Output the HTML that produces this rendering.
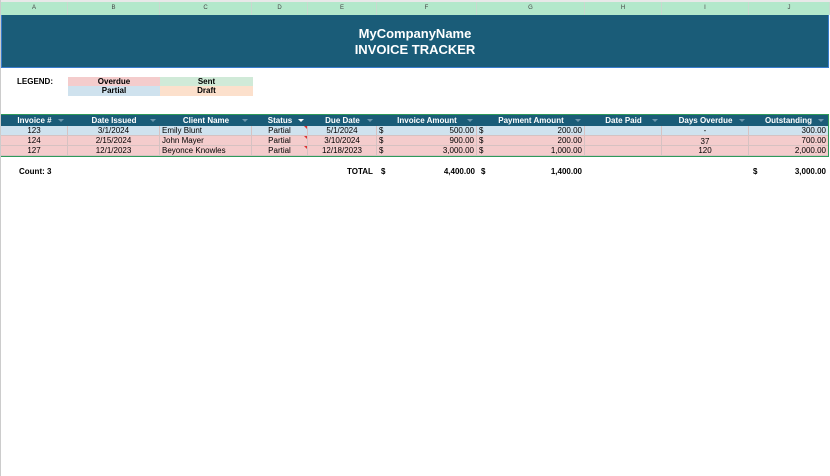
<!DOCTYPE html>
<html><head><meta charset="utf-8"><style>
*{margin:0;padding:0;box-sizing:border-box}
body{width:830px;height:476px;background:#fff;position:relative;overflow:hidden;font-family:"Liberation Sans",Arial,sans-serif;}
.a{position:absolute;white-space:nowrap;}
.hc{position:absolute;top:2px;height:13px;background:#b3e8cb;border-right:1px solid #c8d8cf;font-size:6px;color:#444;text-align:center;line-height:13px;}
.row{position:absolute;left:1px;width:827px;}
.c{position:absolute;top:0;height:100%;font-size:8px;line-height:10px;padding:0 2px;border-right:1px solid #d6c2c2;border-bottom:1px solid #d6c2c2;}
.th{position:absolute;top:0;height:11px;font-size:8px;font-weight:bold;color:#fff;line-height:11px;text-align:center;}
.f{position:absolute;right:4px;top:4px;width:0;height:0;border-left:3px solid transparent;border-right:3px solid transparent;border-top:3px solid #6d97ad;}
.tri{position:absolute;right:0;top:0;width:0;height:0;border-left:3px solid transparent;border-top:3px solid #d33;}
</style></head><body>
<div class="a" style="left:0;top:0;width:1px;height:476px;background:#ccc"></div>
<div class="a" style="left:1px;top:0;width:829px;height:2px;background:#e8e8e8"></div>
<div class="hc" style="left:1px;width:67px">A</div>
<div class="hc" style="left:68px;width:92px">B</div>
<div class="hc" style="left:160px;width:92px">C</div>
<div class="hc" style="left:252px;width:56px">D</div>
<div class="hc" style="left:308px;width:69px">E</div>
<div class="hc" style="left:377px;width:100px">F</div>
<div class="hc" style="left:477px;width:108px">G</div>
<div class="hc" style="left:585px;width:77px">H</div>
<div class="hc" style="left:662px;width:87px">I</div>
<div class="hc" style="left:749px;width:81px">J</div>

<div class="a" style="left:1px;top:15px;width:828px;height:53px;background:#1a5c78;border-left:1px solid #3a7ccc;border-bottom:1px solid #3a7ccc;border-right:1px solid #3a7ccc;color:#fff;font-weight:bold;font-size:13px;text-align:center;line-height:16px;padding-top:11px">MyCompanyName<br>INVOICE TRACKER</div>

<div class="a" style="left:17px;top:77px;font-size:8px;font-weight:bold">LEGEND:</div>
<div class="a" style="left:68px;top:77px;width:92px;height:9px;background:#f4cccc;font-size:8px;font-weight:bold;text-align:center;line-height:9px">Overdue</div>
<div class="a" style="left:160px;top:77px;width:93px;height:9px;background:#d0ead8;font-size:8px;font-weight:bold;text-align:center;line-height:9px">Sent</div>
<div class="a" style="left:68px;top:86px;width:92px;height:10px;background:#cfe2ee;font-size:8px;font-weight:bold;text-align:center;line-height:10px">Partial</div>
<div class="a" style="left:160px;top:86px;width:93px;height:10px;background:#fce0cc;font-size:8px;font-weight:bold;text-align:center;line-height:10px">Draft</div>

<div class="a" style="left:1px;top:114px;width:828px;height:43px;border:1px solid #2f9a5a"></div>
<div class="row" style="top:115px;height:11px;background:#1a5c78">
<div class="th" style="left:0;width:67px">Invoice #<span class="f"></span></div>
<div class="th" style="left:67px;width:92px">Date Issued<span class="f"></span></div>
<div class="th" style="left:159px;width:92px">Client Name<span class="f"></span></div>
<div class="th" style="left:251px;width:56px">Status<span class="f" style="border-top-color:#fff"></span></div>
<div class="th" style="left:307px;width:69px">Due Date<span class="f"></span></div>
<div class="th" style="left:376px;width:100px">Invoice Amount<span class="f"></span></div>
<div class="th" style="left:476px;width:108px">Payment Amount<span class="f"></span></div>
<div class="th" style="left:584px;width:77px">Date Paid<span class="f"></span></div>
<div class="th" style="left:661px;width:87px">Days Overdue<span class="f"></span></div>
<div class="th" style="left:748px;width:79px">Outstanding<span class="f"></span></div>
</div>

<div class="row" style="top:126px;height:10px;background:#cfe2ee">
<div class="c" style="left:0;width:67px;text-align:center">123</div>
<div class="c" style="left:67px;width:92px;text-align:center">3/1/2024</div>
<div class="c" style="left:159px;width:92px">Emily Blunt</div>
<div class="c" style="left:251px;width:56px;text-align:center">Partial<span class="tri"></span></div>
<div class="c" style="left:307px;width:69px;text-align:center">5/1/2024</div>
<div class="c" style="left:376px;width:100px">$<span style="float:right">500.00</span></div>
<div class="c" style="left:476px;width:108px">$<span style="float:right">200.00</span></div>
<div class="c" style="left:584px;width:77px"></div>
<div class="c" style="left:661px;width:87px;text-align:center">-</div>
<div class="c" style="left:748px;width:79px;text-align:right;border-right:0">300.00</div>
</div>
<div class="row" style="top:136px;height:10px;background:#f4cccc">
<div class="c" style="left:0;width:67px;text-align:center">124</div>
<div class="c" style="left:67px;width:92px;text-align:center">2/15/2024</div>
<div class="c" style="left:159px;width:92px">John Mayer</div>
<div class="c" style="left:251px;width:56px;text-align:center">Partial<span class="tri"></span></div>
<div class="c" style="left:307px;width:69px;text-align:center">3/10/2024</div>
<div class="c" style="left:376px;width:100px">$<span style="float:right">900.00</span></div>
<div class="c" style="left:476px;width:108px">$<span style="float:right">200.00</span></div>
<div class="c" style="left:584px;width:77px"></div>
<div class="c" style="left:661px;width:87px;text-align:center;line-height:12px">37</div>
<div class="c" style="left:748px;width:79px;text-align:right;border-right:0">700.00</div>
</div>
<div class="row" style="top:146px;height:10px;background:#f4cccc">
<div class="c" style="left:0;width:67px;text-align:center">127</div>
<div class="c" style="left:67px;width:92px;text-align:center">12/1/2023</div>
<div class="c" style="left:159px;width:92px">Beyonce Knowles</div>
<div class="c" style="left:251px;width:56px;text-align:center">Partial<span class="tri"></span></div>
<div class="c" style="left:307px;width:69px;text-align:center">12/18/2023</div>
<div class="c" style="left:376px;width:100px">$<span style="float:right">3,000.00</span></div>
<div class="c" style="left:476px;width:108px">$<span style="float:right">1,000.00</span></div>
<div class="c" style="left:584px;width:77px"></div>
<div class="c" style="left:661px;width:87px;text-align:center">120</div>
<div class="c" style="left:748px;width:79px;text-align:right;border-right:0">2,000.00</div>
</div>

<div class="a" style="left:19px;top:167px;font-size:8px;font-weight:bold">Count: 3</div>
<div class="a" style="left:347px;top:167px;font-size:8px;font-weight:bold">TOTAL</div>
<div class="a" style="left:381px;top:167px;font-size:8px;font-weight:bold">$</div>
<div class="a" style="left:380px;top:167px;width:95px;text-align:right;font-size:8px;font-weight:bold">4,400.00</div>
<div class="a" style="left:481px;top:167px;font-size:8px;font-weight:bold">$</div>
<div class="a" style="left:480px;top:167px;width:102px;text-align:right;font-size:8px;font-weight:bold">1,400.00</div>
<div class="a" style="left:753px;top:167px;font-size:8px;font-weight:bold">$</div>
<div class="a" style="left:750px;top:167px;width:76px;text-align:right;font-size:8px;font-weight:bold">3,000.00</div>
</body></html>
